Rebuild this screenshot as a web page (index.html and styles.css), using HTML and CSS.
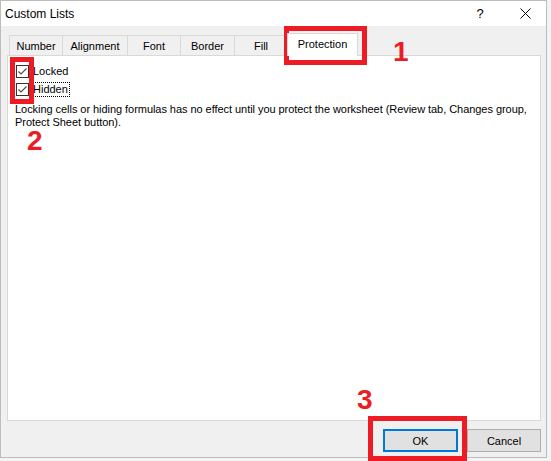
FILE: index.html
```html
<!DOCTYPE html>
<html>
<head>
<meta charset="utf-8">
<link rel="stylesheet" href="styles.css">
</head>
<body>
<div class="screen">
  <div class="dialog">
    <div class="titlebar">
      <span class="title">Custom Lists</span>
      <span class="help">?</span>
      <span class="close">
        <svg width="11" height="11" viewBox="0 0 11 11"><path d="M0.5 0.5 L10.5 10.5 M10.5 0.5 L0.5 10.5" stroke="#000" stroke-width="1" fill="none"/></svg>
      </span>
    </div>
    <div class="body">
      <div class="tabs">
        <div class="tab w-number">Number</div>
        <div class="tab w-align">Alignment</div>
        <div class="tab w-font">Font</div>
        <div class="tab w-border">Border</div>
        <div class="tab w-fill">Fill</div>
        <div class="tab tab-active w-prot">Protection</div>
      </div>
      <div class="panel">
        <div class="check-row">
          <svg class="cb" viewBox="0 0 13 13"><rect x="0.5" y="0.5" width="12" height="12" fill="#fff" stroke="#333"/><polyline points="2.5,6.5 5,9 10.5,3.5" fill="none" stroke="#4a4a4a" stroke-width="1.1"/></svg>
          <span class="cb-label">Locked</span>
        </div>
        <div class="check-row">
          <svg class="cb" viewBox="0 0 13 13"><rect x="0.5" y="0.5" width="12" height="12" fill="#fff" stroke="#333"/><polyline points="2.5,6.5 5,9 10.5,3.5" fill="none" stroke="#4a4a4a" stroke-width="1.1"/></svg>
          <span class="cb-label focus">Hidden</span>
        </div>
        <p class="note">Locking cells or hiding formulas has no effect until you protect the worksheet (Review tab, Changes group,<br>Protect Sheet button).</p>
      </div>
      <div class="buttons">
        <button class="btn btn-ok">OK</button>
        <button class="btn btn-cancel">Cancel</button>
      </div>
    </div>
  </div>
  <div class="mark-box box1"></div>
  <div class="mark-box box2"></div>
  <div class="mark-box box3"></div>
  <div class="num n1">1</div>
  <div class="num n2">2</div>
  <div class="num n3">3</div>
</div>
</body>
</html>
```
FILE: styles.css
```css
html, body {
  margin: 0;
  padding: 0;
}
body {
  background: #f3f4f6;
  width: 551px;
  height: 461px;
  overflow: hidden;
  font-family: "Liberation Sans", Arial, sans-serif;
  color: #000;
}
.screen {
  position: relative;
  width: 551px;
  height: 461px;
}
.dialog {
  width: 547px;
  height: 458px;
  box-sizing: border-box;
  border: 1px solid #bcbcbc;
  background: #f0f0f0;
  display: flex;
  flex-direction: column;
}
.titlebar {
  height: 25px;
  flex-shrink: 0;
  background: #fff;
  display: flex;
  align-items: center;
}
.title {
  font-size: 12px;
  margin-left: 4px;
  flex: 1;
}
.help {
  font-size: 13px;
  width: 10px;
  text-align: center;
  margin-right: 35px;
}
.close {
  width: 11px;
  height: 11px;
  display: flex;
  margin-right: 15px;
}
.body {
  flex: 1;
  padding: 7px 5px 0 6px;
  display: flex;
  flex-direction: column;
}
.tabs {
  display: flex;
  align-items: flex-end;
  height: 22px;
  margin-left: 2px;
}
.tab {
  height: 20px;
  box-sizing: border-box;
  border-top: 1px solid #d9d9d9;
  border-left: 1px solid #d9d9d9;
  background: #f0f0f0;
  font-size: 11px;
  display: flex;
  align-items: center;
  justify-content: center;
}
.tab-active {
  height: 23px;
  margin-bottom: -1px;
  background: #fff;
  border-right: 1px solid #d9d9d9;
  position: relative;
  z-index: 1;
  padding-bottom: 2px;
}
.w-number { width: 53px; }
.w-align { width: 65px; }
.w-font { width: 53px; }
.w-border { width: 54px; }
.w-fill { width: 53px; }
.w-prot { width: 71px; }
.panel {
  width: 534px;
  height: 366px;
  box-sizing: border-box;
  border: 1px solid #d9d9d9;
  background: #fff;
  padding: 8px 0 0 7px;
}
.check-row {
  display: flex;
  align-items: center;
  height: 15px;
  margin-left: 1px;
  margin-bottom: 3px;
}
.cb {
  width: 13px;
  height: 13px;
  flex-shrink: 0;
}
.cb-label {
  font-size: 11px;
  line-height: 13px;
  margin-left: 3px;
  border: 1px dotted transparent;
  padding: 0 1px 0 0;
}
.focus {
  border-color: #000;
}
.note {
  margin: 6px 0 0 0;
  font-size: 11px;
  line-height: 13px;
  letter-spacing: -0.05px;
  white-space: nowrap;
}
.buttons {
  display: flex;
  justify-content: flex-end;
  gap: 9px;
  margin-top: 8px;
}
.btn {
  height: 23px;
  box-sizing: border-box;
  font-family: "Liberation Sans", Arial, sans-serif;
  font-size: 11px;
  color: #000;
  background: #e1e1e1;
  border: 1px solid #adadad;
  padding: 0;
}
.btn-ok {
  width: 75px;
  border: 2px solid #0078d7;
}
.btn-cancel {
  width: 74px;
}
.mark-box {
  position: absolute;
  box-sizing: border-box;
  border: 5px solid #ed1c24;
}
.box1 { left: 284px; top: 26px; width: 83px; height: 39px; }
.box2 { left: 10px; top: 57px; width: 24px; height: 47px; }
.box3 { left: 368px; top: 416px; width: 99px; height: 45px; }
.num {
  position: absolute;
  font-family: "Liberation Sans", Arial, sans-serif;
  font-weight: bold;
  font-size: 28px;
  line-height: 28px;
  color: #ed1c24;
}
.n1 { left: 393px; top: 38px; }
.n2 { left: 27px; top: 127px; }
.n3 { left: 357px; top: 386px; }
```
